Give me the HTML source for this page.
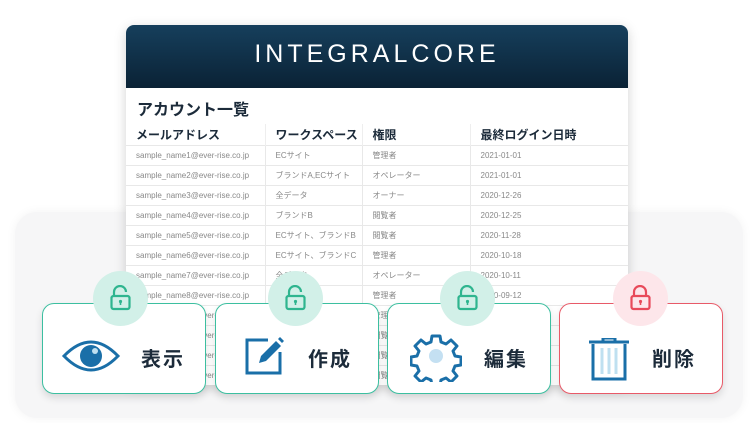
<!DOCTYPE html>
<html><head><meta charset="utf-8"><style>
*{margin:0;padding:0;box-sizing:border-box}
body{width:750px;height:423px;background:#fff;position:relative;overflow:hidden;font-family:"Liberation Sans","Noto Sans CJK JP",sans-serif}
.bg{position:absolute;left:15px;top:212px;width:728px;height:206px;background:#f6f6f7;border-radius:22px;box-shadow:0 0 10px rgba(0,0,0,.05)}
.card{position:absolute;left:126px;top:25px;width:502px;height:360px;background:#fff;border-radius:8px;box-shadow:0 3px 12px rgba(0,0,0,.18);overflow:hidden}
.hd{height:63px;background:linear-gradient(#163f5c,#0a2235);color:#fff;text-align:center;font-size:25px;letter-spacing:4px;line-height:58px;font-weight:300}
.t{position:absolute;left:11px;top:71px;font-size:16px;font-weight:bold;color:#1c2b3a}
table{position:absolute;left:0;top:99px;width:502px;border-collapse:collapse}
th{font-size:12px;color:#1c2b3a;text-align:left;padding-left:10px;height:21px;font-weight:bold;border-left:1px solid #eee}
td{font-size:8px;color:#888;padding-left:10px;height:20px;border-top:1px solid #e8e8e8;border-left:1px solid #e8e8e8}
th:first-child,td:first-child{border-left:none}
.b{position:absolute;top:303px;width:164px;height:91px;background:#fff;border:1.5px solid #3cbfa0;border-radius:12px;box-shadow:0 4px 8px rgba(0,0,0,.12)}
.b.r{border-color:#e85a68}
.c{position:absolute;top:271px;width:55px;height:55px;border-radius:50%;background:#d2f0e8}
.c.r{background:#fde6ea}
.c svg{position:absolute;left:17px;top:14px}
.lb{position:absolute;top:39px;font-size:20px;font-weight:bold;color:#1c2b3a;letter-spacing:2px}
.ic{position:absolute;left:18px;top:32px}
</style></head><body>
<div class="bg"></div>
<div class="card">
<div class="hd">INTEGRALCORE</div>
<div class="t">アカウント一覧</div>
<table>
<tr><th style="width:139px">メールアドレス</th><th style="width:97px">ワークスペース</th><th style="width:108px">権限</th><th>最終ログイン日時</th></tr>
<tr><td>sample_name1@ever-rise.co.jp</td><td>ECサイト</td><td>管理者</td><td>2021-01-01</td></tr>
<tr><td>sample_name2@ever-rise.co.jp</td><td>ブランドA,ECサイト</td><td>オペレーター</td><td>2021-01-01</td></tr>
<tr><td>sample_name3@ever-rise.co.jp</td><td>全データ</td><td>オーナー</td><td>2020-12-26</td></tr>
<tr><td>sample_name4@ever-rise.co.jp</td><td>ブランドB</td><td>閲覧者</td><td>2020-12-25</td></tr>
<tr><td>sample_name5@ever-rise.co.jp</td><td>ECサイト、ブランドB</td><td>閲覧者</td><td>2020-11-28</td></tr>
<tr><td>sample_name6@ever-rise.co.jp</td><td>ECサイト、ブランドC</td><td>管理者</td><td>2020-10-18</td></tr>
<tr><td>sample_name7@ever-rise.co.jp</td><td>全データ</td><td>オペレーター</td><td>2020-10-11</td></tr>
<tr><td>sample_name8@ever-rise.co.jp</td><td>全データ</td><td>管理者</td><td>2020-09-12</td></tr>
<tr><td>sample_name9@ever-rise.co.jp</td><td>全データ</td><td>管理者</td><td>2020-09-01</td></tr>
<tr><td>sample_name9@ever-rise.co.jp</td><td>全データ</td><td>閲覧者</td><td>2020-08-01</td></tr>
<tr><td>sample_name9@ever-rise.co.jp</td><td>全データ</td><td>閲覧者</td><td>2020-07-01</td></tr>
<tr><td>sample_name9@ever-rise.co.jp</td><td>全データ</td><td>閲覧者</td><td>2020-06-01</td></tr>
</table>
</div>

<div class="b" style="left:42px"><svg class="ic" width="60" height="40" viewBox="0 0 60 40"><path d="M3 20Q30-8 57 20Q30 48 3 20Z" fill="none" stroke="#1a6fa8" stroke-width="3"/><circle cx="30" cy="20" r="11" fill="#1a6fa8"/><circle cx="34" cy="15" r="3" fill="#bfe0f0"/></svg><div class="lb" style="left:98px">表示</div></div>
<div class="b" style="left:215px"><svg class="ic" style="left:28px;top:28px" width="42" height="44" viewBox="0 0 42 44"><path d="M24 8H3V41H36V20" fill="none" stroke="#1a6fa8" stroke-width="3"/><path d="M15 31L17 24L32 9L37 14L22 29Z" fill="#1a6fa8"/><path d="M34 7L36 5L40 9L38 11Z" fill="#1a6fa8"/></svg><div class="lb" style="left:92px">作成</div></div>
<div class="b" style="left:387px"><svg class="ic" style="left:22px;top:26px" width="52" height="52" viewBox="-2 -2 52 52"><path d="M20 4h8l1 6 5 2 5-4 6 6-4 5 2 5 6 1v8l-6 1-2 5 4 5-6 6-5-4-5 2-1 6h-8l-1-6-5-2-5 4-6-6 4-5-2-5-6-1v-8l6-1 2-5-4-5 6-6 5 4 5-2z" fill="none" stroke="#1a6fa8" stroke-width="3" stroke-linejoin="round"/><circle cx="24" cy="24" r="7" fill="#c4e0f2"/></svg><div class="lb" style="left:96px">編集</div></div>
<div class="b r" style="left:559px"><svg class="ic" style="left:28px;top:34px" width="44" height="44" viewBox="0 0 44 44"><path d="M1 4H41M15 4V0H27V4" fill="none" stroke="#1a6fa8" stroke-width="3"/><path d="M5 6V41H37V6" fill="none" stroke="#1a6fa8" stroke-width="3"/><path d="M14 10V36M21 10V36M28 10V36" stroke="#bfe0f0" stroke-width="3"/></svg><div class="lb" style="left:92px">削除</div></div>

<div class="c" style="left:93px"><svg width="21" height="26" viewBox="0 0 21 26"><path d="M4 11V7a6 6 0 0 1 12 0" fill="none" stroke="#2fb58f" stroke-width="2.2"/><rect x="1.5" y="11" width="18" height="13" rx="2" fill="none" stroke="#2fb58f" stroke-width="2.2"/><circle cx="10.5" cy="16.5" r="1.6" fill="#2fb58f"/><path d="M10.5 17v3" stroke="#2fb58f" stroke-width="1.6"/></svg></div>
<div class="c" style="left:268px"><svg width="21" height="26" viewBox="0 0 21 26"><path d="M4 11V7a6 6 0 0 1 12 0" fill="none" stroke="#2fb58f" stroke-width="2.2"/><rect x="1.5" y="11" width="18" height="13" rx="2" fill="none" stroke="#2fb58f" stroke-width="2.2"/><circle cx="10.5" cy="16.5" r="1.6" fill="#2fb58f"/><path d="M10.5 17v3" stroke="#2fb58f" stroke-width="1.6"/></svg></div>
<div class="c" style="left:440px"><svg width="21" height="26" viewBox="0 0 21 26"><path d="M4 11V7a6 6 0 0 1 12 0" fill="none" stroke="#2fb58f" stroke-width="2.2"/><rect x="1.5" y="11" width="18" height="13" rx="2" fill="none" stroke="#2fb58f" stroke-width="2.2"/><circle cx="10.5" cy="16.5" r="1.6" fill="#2fb58f"/><path d="M10.5 17v3" stroke="#2fb58f" stroke-width="1.6"/></svg></div>
<div class="c r" style="left:613px"><svg width="21" height="26" viewBox="0 0 21 26"><path d="M4 11V7a6 6 0 0 1 12 0V11" fill="none" stroke="#e84a5a" stroke-width="2.2"/><rect x="1.5" y="11" width="18" height="13" rx="2" fill="none" stroke="#e84a5a" stroke-width="2.2"/><circle cx="10.5" cy="16.5" r="1.6" fill="#e84a5a"/><path d="M10.5 17v3" stroke="#e84a5a" stroke-width="1.6"/></svg></div>
</body></html>
